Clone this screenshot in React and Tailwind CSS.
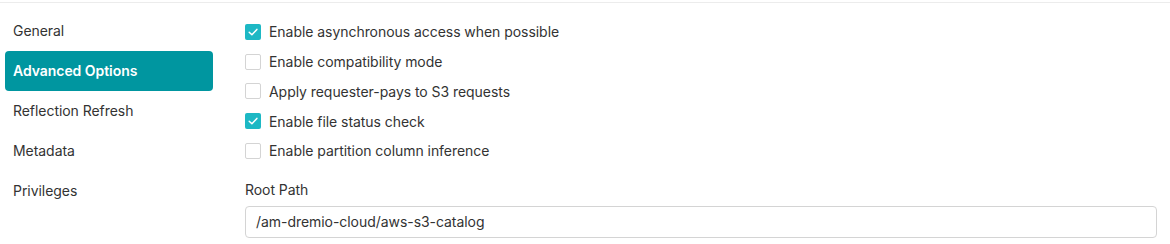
import React from "react";

function Check({ checked }) {
  return checked ? (
    <span className="flex h-4 w-4 items-center justify-center rounded-[2px] bg-[#1db8c4]">
      <svg width="12" height="12" viewBox="0 0 12 12" fill="none">
        <path d="M2.2 6.2 L4.9 8.8 L9.9 3.4" stroke="white" strokeWidth="1.5" strokeLinecap="round" strokeLinejoin="round" />
      </svg>
    </span>
  ) : (
    <span className="h-4 w-4 rounded-[2px] border border-[#d4d4d4] bg-white" />
  );
}

const nav = ["General", "Advanced Options", "Reflection Refresh", "Metadata", "Privileges"];
const opts = [
  ["Enable asynchronous access when possible", true],
  ["Enable compatibility mode", false],
  ["Apply requester-pays to S3 requests", false],
  ["Enable file status check", true],
  ["Enable partition column inference", false],
];

export default function App() {
  return (
    <div className="h-[244px] w-[1170px] bg-white pt-[2px] text-[14px] tracking-[-0.05px] text-[#333] [font-family:Inter,'Noto_Sans',sans-serif]">
      <div className="flex border-t border-[#ececec]">
        <div className="ml-[5px] mt-2 flex w-[208px] flex-col">
          {nav.map((n) => (
            <div
              key={n}
              className={
                n === "Advanced Options"
                  ? "flex h-10 items-center rounded-[4px] bg-[#0096a0] px-2 pb-px font-semibold text-white"
                  : "flex h-10 items-center px-2 pb-px"
              }
            >
              {n}
            </div>
          ))}
        </div>
        <div className="ml-8 mt-[14px] flex flex-1 flex-col pr-[13px]">
          {opts.map(([t, c]) => (
            <div key={t} className="flex h-[29.75px] items-center gap-2">
              <Check checked={c} />
              <span>{t}</span>
            </div>
          ))}
          <div className="mt-[14px] flex h-5 items-center">Root Path</div>
          <div className="mt-[6px] flex h-[32px] items-center rounded-[4px] border border-[#d4d4d4] px-[10px]">
            /am-dremio-cloud/aws-s3-catalog
          </div>
        </div>
      </div>
    </div>
  );
}
